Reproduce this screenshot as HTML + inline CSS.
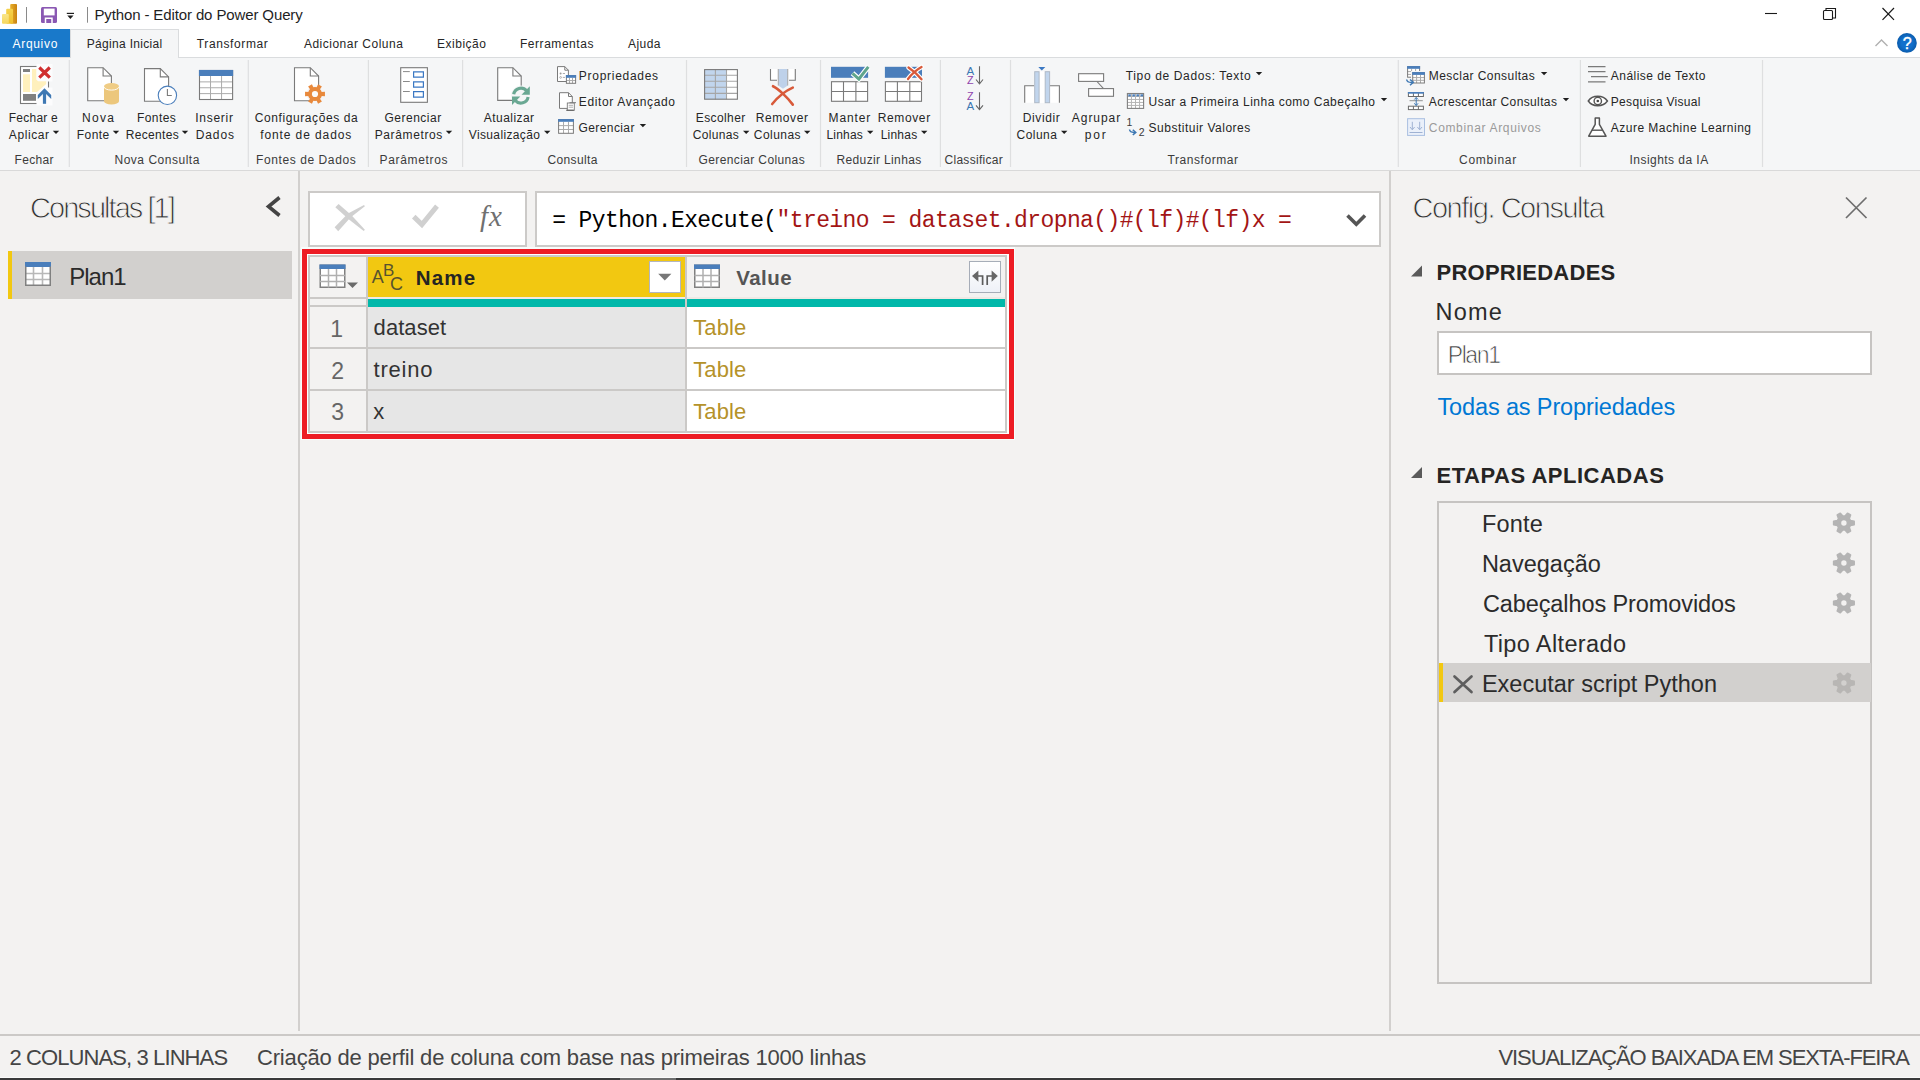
<!DOCTYPE html>
<html lang="pt-BR"><head><meta charset="utf-8"><title>Python - Editor do Power Query</title>
<style>
*{box-sizing:border-box;margin:0;padding:0}
html,body{width:1920px;height:1080px;overflow:hidden;background:#fff}
body{position:relative;font-family:"Liberation Sans",sans-serif}
.a{position:absolute}
.t{position:absolute;white-space:pre;line-height:1;display:block}
svg{position:absolute;overflow:visible}

</style></head>
<body>
<!-- backgrounds -->
<div class="a" style="left:0;top:29px;width:1920px;height:29px;border-bottom:1px solid #dadcde"></div>
<div class="a" style="left:0;top:29px;width:70px;height:28px;background:#1979ca"></div>
<div class="a" style="left:70px;top:29px;width:109px;height:29px;background:#f5f6f7;border:1px solid #dadcde;border-bottom:none"></div>
<div class="a" style="left:0;top:58px;width:1920px;height:113px;background:#f5f6f7;border-bottom:1px solid #d9d9d9"></div>
<div class="a" style="left:0;top:171px;width:1920px;height:864px;background:#f3f2f1"></div>
<!-- pane dividers -->
<div class="a" style="left:298px;top:171px;width:2px;height:860px;background:#d2d0ce"></div>
<div class="a" style="left:1389px;top:171px;width:2px;height:860px;background:#d2d0ce"></div>
<!-- status bar -->
<div class="a" style="left:0;top:1034px;width:1920px;height:46px;background:#f3f2f1;border-top:2px solid #cbc9c7"></div>
<div class="a" style="left:0;top:1077px;width:1920px;height:1px;background:#fbfbfb"></div>
<div class="a" style="left:0;top:1078px;width:1920px;height:2px;background:#3a3a3a"></div>
<div class="a" style="left:620px;top:1078px;width:56px;height:2px;background:#6e6e6e"></div>

<!-- LEFT PANE -->
<svg style="left:0;top:0" width="300" height="320" viewBox="0 0 300 320">
  <polyline points="279.5,197.5 268.5,206.5 279.5,215.5" fill="none" stroke="#444" stroke-width="3.6" stroke-linejoin="miter"/>
</svg>
<div class="a" style="left:8px;top:251px;width:284px;height:48px;background:#d2d0ce;border-left:4px solid #f2c811"></div>
<svg style="left:25px;top:262px" width="26" height="24" viewBox="0 0 26 24">
  <rect x="0.5" y="0.5" width="25" height="23" fill="#fff" stroke="#808080"/>
  <rect x="0" y="0" width="26" height="5" fill="#4a7ebb"/>
  <path d="M0.5 11.5H25.5M0.5 17.5H25.5M8.5 5V23.5M17.5 5V23.5" stroke="#b8b8b8" stroke-width="1.6" fill="none"/>
  <rect x="0.75" y="0.75" width="24.5" height="22.5" fill="none" stroke="#808080" stroke-width="1.5"/>
  <rect x="0" y="0" width="26" height="4.5" fill="#4a7ebb"/>
</svg>

<!-- FORMULA BAR -->
<div class="a" style="left:308px;top:191px;width:219px;height:56px;background:#fff;border:2px solid #cccac8"></div>
<div class="a" style="left:535px;top:191px;width:846px;height:56px;background:#fff;border:2px solid #cccac8"></div>
<svg style="left:300px;top:185px" width="1090" height="70" viewBox="300 185 1090 70">
  <polygon points="335.300,207.300 338.600,203.900 351.500,215.300 364.900,229.800 363.700,231.100 349,219.400" fill="#d0d0d0"/>
  <polygon points="334.600,227.200 338.200,231.300 350.500,217.500 364.900,206.300 364,205.100 348,213.500" fill="#d0d0d0"/>
  <polyline points="413.750,216.600 421.900,224.600 437,206.200" fill="none" stroke="#d0d0d0" stroke-width="5"/>
  <polyline points="1347.5,215.5 1356.3,224.3 1365,215.5" fill="none" stroke="#555" stroke-width="3.6"/>
</svg>

<!-- TABLE -->
<div class="a" style="left:302px;top:249px;width:712px;height:190px;border:5px solid #ed1c24;background:#fff;box-shadow:0 0 0 1px #f8fdfc"></div>
<div class="a" style="left:301px;top:247px;width:714px;height:1px;background:#f8fdfc"></div>
<div class="a" style="left:308px;top:255px;width:699px;height:178px;background:#cbc9c7"></div>
<!-- index column -->
<div class="a" style="left:310px;top:257px;width:56px;height:40px;background:#f3f2f1"></div>
<div class="a" style="left:310px;top:299px;width:56px;height:6px;background:#f3f2f1"></div>
<div class="a" style="left:310px;top:307px;width:56px;height:40px;background:#f3f2f1"></div>
<div class="a" style="left:310px;top:349px;width:56px;height:40px;background:#f3f2f1"></div>
<div class="a" style="left:310px;top:391px;width:56px;height:40px;background:#f3f2f1"></div>
<!-- name column -->
<div class="a" style="left:368px;top:257px;width:317px;height:40px;background:#f2c811"></div>
<div class="a" style="left:368px;top:297px;width:317px;height:2px;background:#efe9e4"></div>
<div class="a" style="left:368px;top:299px;width:317px;height:8px;background:#01b8aa"></div>
<div class="a" style="left:368px;top:307px;width:317px;height:40px;background:#e6e6e6"></div>
<div class="a" style="left:368px;top:349px;width:317px;height:40px;background:#e6e6e6"></div>
<div class="a" style="left:368px;top:391px;width:317px;height:40px;background:#e6e6e6"></div>
<!-- value column -->
<div class="a" style="left:687px;top:257px;width:318px;height:40px;background:#f3f2f1"></div>
<div class="a" style="left:687px;top:297px;width:318px;height:2px;background:#efe9e4"></div>
<div class="a" style="left:687px;top:299px;width:318px;height:8px;background:#01b8aa"></div>
<div class="a" style="left:687px;top:307px;width:318px;height:40px;background:#ffffff"></div>
<div class="a" style="left:687px;top:349px;width:318px;height:40px;background:#ffffff"></div>
<div class="a" style="left:687px;top:391px;width:318px;height:40px;background:#ffffff"></div>
<!-- header widgets -->
<div class="a" style="left:649.2px;top:261.2px;width:31.6px;height:31.5px;background:#fff;border:1.3px solid #b3b6c0"></div>
<div class="a" style="left:969.1px;top:261px;width:31.8px;height:31.9px;background:linear-gradient(#ffffff,#eef1f7);border:1.4px solid #a6adb8"></div>
<svg style="left:300px;top:250px" width="720" height="60" viewBox="300 250 720 60">
  <polygon points="658.2,273.8 671.4,273.8 664.8,280.4" fill="#777"/>
  <!-- index header icon -->
  <rect x="320.25" y="265.25" width="24.5" height="22" fill="#fff" stroke="#808080" stroke-width="1.5"/>
  <path d="M320 275.5H345M320 281.5H345M328.5 268V287.5M336.5 268V287.5" stroke="#b0b0b0" stroke-width="1.5" fill="none"/>
  <rect x="319.5" y="264.5" width="26" height="4.5" fill="#4a7ebb"/>
  <polygon points="347,282.5 358,282.5 352.5,288" fill="#6a6a6a"/>
  <!-- value header icon -->
  <rect x="694.75" y="265.25" width="24.5" height="22" fill="#fff" stroke="#808080" stroke-width="1.5"/>
  <path d="M694.5 275.5H719.5M694.5 281.5H719.5M703 268V287.5M711 268V287.5" stroke="#b0b0b0" stroke-width="1.5" fill="none"/>
  <rect x="694" y="264.5" width="26" height="4.5" fill="#4a7ebb"/>
  <!-- expand icon -->
  <path d="M977.5 276H982.6V285M992.3 276H987.2V285" stroke="#5c5c5c" stroke-width="1.7" fill="none"/>
  <polygon points="972,276 978.4,270.4 978.4,281.8" fill="#666"/>
  <polygon points="997.8,276 991.6,270.4 991.6,281.8" fill="#666"/>
</svg>

<!-- RIGHT PANE -->
<svg style="left:1400px;top:190px" width="500" height="520" viewBox="1400 190 500 520">
  <path d="M1846 197.5L1866.5 218M1866.5 197.5L1846 218" stroke="#6e6e6e" stroke-width="1.7" fill="none"/>
  <polygon points="1422,265.5 1422,276.5 1411,276.5" fill="#5a5a5a"/>
  <polygon points="1422,467 1422,478 1411,478" fill="#5a5a5a"/>
</svg>
<div class="a" style="left:1437px;top:331px;width:435px;height:44px;background:#fff;border:2px solid #c6c4c2"></div>
<div class="a" style="left:1437px;top:501px;width:435px;height:483px;border:2px solid #c6c4c2"></div>
<div class="a" style="left:1439px;top:663px;width:431.5px;height:39px;background:#d2d0ce;border-left:4px solid #f2c811"></div>
<svg style="left:1440px;top:505px" width="430" height="200" viewBox="1440 505 430 200">
  <defs>
    <g id="gear"><path fill-rule="evenodd" stroke-width="1.6" stroke-linejoin="round" d="M6.55 -2.47L10.25 -1.76L10.25 1.76L6.55 2.47L5.41 4.44L6.65 8.00L3.60 9.76L1.14 6.91L-1.14 6.91L-3.60 9.76L-6.65 8.00L-5.41 4.44L-6.55 2.47L-10.25 1.76L-10.25 -1.76L-6.55 -2.47L-5.41 -4.44L-6.65 -8.00L-3.60 -9.76L-1.14 -6.91L1.14 -6.91L3.60 -9.76L6.65 -8.00L5.41 -4.44ZM3.50 0.00A3.5 3.5 0 1 0 -3.50 0.00A3.5 3.5 0 1 0 3.50 0.00Z"/></g>
  </defs>
  <use href="#gear" x="1843.9" y="523.0" fill="#b4b4b4" stroke="#b4b4b4"/>
  <use href="#gear" x="1843.9" y="563.0" fill="#b4b4b4" stroke="#b4b4b4"/>
  <use href="#gear" x="1843.9" y="603.0" fill="#b4b4b4" stroke="#b4b4b4"/>
  <use href="#gear" x="1843.9" y="683" fill="#b8b6b4" stroke="#b8b6b4"/>
  <path d="M1454.5 676.500L1471.500 692M1471.500 676.500L1454.500 692" stroke="#5e5e5e" stroke-width="2.700" stroke-linecap="round" fill="none"/>
</svg>
<svg style="left:0;top:0" width="1920" height="175" viewBox="0 0 1920 175">
<linearGradient id="pb1" x1="0" y1="0" x2="1" y2="0"><stop offset="0" stop-color="#e9b12c"/><stop offset="1" stop-color="#c9820f"/></linearGradient>
<linearGradient id="pb2" x1="0" y1="0" x2="0" y2="1"><stop offset="0" stop-color="#f6d34d"/><stop offset="1" stop-color="#f0bf2b"/></linearGradient>
<linearGradient id="pb3" x1="0" y1="0" x2="0" y2="1"><stop offset="0" stop-color="#f9e589"/><stop offset="1" stop-color="#f6d75c"/></linearGradient>
<rect x="10.2" y="4" width="6.8" height="19.8" rx="1" fill="url(#pb1)"/>
<rect x="6.2" y="8.8" width="6.8" height="15" rx="1" fill="url(#pb2)"/>
<rect x="2" y="14" width="6.8" height="9.8" rx="1" fill="url(#pb3)"/>
<path d="M26.5 7V22.7M87.5 7V22.7" stroke="#8a8a8a" stroke-width="1"/>
<rect x="41" y="7" width="16" height="16" rx="1.5" fill="#8a58b3"/>
<rect x="43.8" y="8.6" width="10.8" height="6.8" fill="#fff"/>
<path d="M45.5 23V18.2H52V23" fill="none" stroke="#fff" stroke-width="1.5"/>
<rect x="66.8" y="12.8" width="7.2" height="1.2" fill="#1e1e1e"/>
<polygon points="67.3,15.6 73.5,15.6 70.39999999999999,19" fill="#1e1e1e"/>
<path d="M1765 13.5H1777" stroke="#1a1a1a" stroke-width="1.1"/>
<rect x="1823.5" y="10.5" width="9" height="9" fill="none" stroke="#1a1a1a" stroke-width="1.1" rx="1"/>
<path d="M1826 10.5V8.5H1835.5V18H1832.5" fill="none" stroke="#1a1a1a" stroke-width="1.1"/>
<path d="M1882.5 8L1894 19.8M1894 8L1882.5 19.8" stroke="#1a1a1a" stroke-width="1.2"/>
<polyline points="1875.5,46 1881.5,40 1887.5,46" fill="none" stroke="#b0b0b0" stroke-width="1.4"/>
<radialGradient id="hg"><stop offset="0.55" stop-color="#1170cc"/><stop offset="1" stop-color="#0b5cad"/></radialGradient><circle cx="1906.9" cy="42.9" r="9.9" fill="url(#hg)"/>
<path d="M69.3 60V167M248.3 60V167M368.4 60V167M462.6 60V167M686.5 60V167M820.5 60V167M940.4 60V167M1010.5 60V167M1398.3 60V167M1580.4 60V167M1762.5 60V167" stroke="#dedfe0" stroke-width="1.2"/>
<polygon points="52.8,130.8 59.199999999999996,130.8 56,134.10000000000002" fill="#1e1e1e"/>
<polygon points="112.8,130.8 119.2,130.8 116,134.10000000000002" fill="#1e1e1e"/>
<polygon points="181.8,130.8 188.20000000000002,130.8 185,134.10000000000002" fill="#1e1e1e"/>
<polygon points="445.8,130.8 452.2,130.8 449,134.10000000000002" fill="#1e1e1e"/>
<polygon points="544,130.8 550.4,130.8 547.2,134.10000000000002" fill="#1e1e1e"/>
<polygon points="743,130.8 749.4,130.8 746.2,134.10000000000002" fill="#1e1e1e"/>
<polygon points="804,130.8 810.4,130.8 807.2,134.10000000000002" fill="#1e1e1e"/>
<polygon points="867,130.8 873.4,130.8 870.2,134.10000000000002" fill="#1e1e1e"/>
<polygon points="921,130.8 927.4,130.8 924.2,134.10000000000002" fill="#1e1e1e"/>
<polygon points="1061,130.8 1067.4,130.8 1064.2,134.10000000000002" fill="#1e1e1e"/>
<polygon points="639.7,124 646.1,124 642.9000000000001,127.3" fill="#1e1e1e"/>
<polygon points="1255.8,72 1262.2,72 1259,75.3" fill="#1e1e1e"/>
<polygon points="1380.8,98 1387.2,98 1384,101.3" fill="#1e1e1e"/>
<polygon points="1540.9,72 1547.3000000000002,72 1544.1000000000001,75.3" fill="#1e1e1e"/>
<polygon points="1562.8,98 1569.2,98 1566,101.3" fill="#1e1e1e"/>
<rect x="20.5" y="66.5" width="28" height="37" fill="#fff" stroke="#7a7a7a" stroke-width="1.1"/>
<rect x="36.5" y="64" width="16" height="17.5" fill="#fcfcfd"/>
<rect x="36.5" y="87.5" width="16" height="18" fill="#fcfcfd"/>
<rect x="23" y="69" width="7" height="3" fill="#808080"/>
<rect x="23" y="74.3" width="7" height="17.7" fill="#fff0bd"/>
<polygon points="32,69 36.3,69 36.3,79.5 38,81.2 46.2,81.2 46.2,84 37,92 32,92" fill="#fff0bd"/>
<rect x="23" y="94" width="13" height="6.8" fill="#808080"/>
<path d="M39.3 67.5L49.8 77.7M49.8 67.5L39.3 77.7" stroke="#d02f2f" stroke-width="3.2"/>
<path d="M44.5 103.8V91" stroke="#3e78b3" stroke-width="3.2"/>
<polygon points="44.5,88.3 51.2,95 51.2,99 44.5,92.5 37.8,99 37.8,95" fill="#3e78b3"/>
<path d="M87.7 67.7H103.10000000000001L111.4 76V100.7H87.7Z" fill="#fff" stroke="#7a7a7a" stroke-width="1.1"/><path d="M103.10000000000001 67.7V76H111.4" fill="none" stroke="#7a7a7a" stroke-width="1.1"/>
<path d="M104 86.5V101.2A7.5 3.3 0 0 0 119 101.2V86.5Z" fill="#ecc77c"/>
<ellipse cx="111.5" cy="86.3" rx="7.5" ry="3.4" fill="#efcc85"/>
<path d="M104 86.8A7.5 3.3 0 0 0 119 86.8" fill="none" stroke="#fff" stroke-width="0.9"/>
<path d="M144.5 68.6H160.29999999999998L168.6 76.89999999999999V101.3H144.5Z" fill="#fff" stroke="#7a7a7a" stroke-width="1.1"/><path d="M160.29999999999998 68.6V76.89999999999999H168.6" fill="none" stroke="#7a7a7a" stroke-width="1.1"/>
<circle cx="167.4" cy="95.3" r="9.2" fill="#fff" stroke="#4a7ebb" stroke-width="1.1"/>
<path d="M167.4 89V95.5H171.8" fill="none" stroke="#7a7a7a" stroke-width="1.1"/>
<rect x="199.5" y="70.5" width="33.099999999999994" height="29" fill="#fff"/><path d="M210.53 76V99.5M221.57 76V99.5M199.5 81.88H232.6M199.5 87.75H232.6M199.5 93.62H232.6" stroke="#ababab" stroke-width="1" fill="none"/><rect x="199.5" y="70.5" width="33.099999999999994" height="29" fill="none" stroke="#7a7a7a" stroke-width="1.1"/><rect x="198.95" y="69.95" width="34.199999999999996" height="6.05" fill="#4a7ebb"/>
<path d="M294.5 67.7H310.3L318.6 76V100.7H294.5Z" fill="#fff" stroke="#7a7a7a" stroke-width="1.1"/><path d="M310.3 67.7V76H318.6" fill="none" stroke="#7a7a7a" stroke-width="1.1"/>
<circle cx="315" cy="94" r="8.5" fill="#f5f6f7"/><circle cx="315" cy="94" r="7" fill="#e8893c"/><path d="M321.21 92.08L324.95 91.77L324.95 96.23L321.21 95.92L319.77 98.42L321.9 101.51L318.05 103.73L316.44 100.34L313.56 100.34L311.95 103.73L308.1 101.51L310.23 98.42L308.79 95.92L305.05 96.23L305.05 91.77L308.79 92.08L310.23 89.58L308.1 86.49L311.95 84.27L313.56 87.66L316.44 87.66L318.05 84.27L321.9 86.49L319.77 89.58ZM318.1 94A3.1 3.1 0 1 0 311.9 94A3.1 3.1 0 1 0 318.1 94Z" fill="#e8893c" fill-rule="evenodd"/><circle cx="315" cy="94" r="3.1" fill="#fbfbfb"/>
<rect x="400.7" y="67.7" width="26.7" height="34.6" fill="#fff" stroke="#7a7a7a" stroke-width="1.1"/>
<path d="M403 71.6H409.8M403 81.5H409.8M403 91.5H409.8" stroke="#8a8a8a" stroke-width="1"/>
<path d="M413.6 71.8H423.4V77.2H413.6ZM413.6 81.8H423.4V87.2H413.6ZM413.6 91.7H423.4V97.2H413.6Z" fill="#fff" stroke="#3b78c3" stroke-width="1.2"/>
<path d="M497.7 67.7H512.9000000000001L521.2 76V100.4H497.7Z" fill="#fff" stroke="#7a7a7a" stroke-width="1.1"/><path d="M512.9000000000001 67.7V76H521.2" fill="none" stroke="#7a7a7a" stroke-width="1.1"/>
<circle cx="520.9" cy="95.6" r="10" fill="#f5f6f7"/>
<path d="M513.7 94.3A7.3 7.3 0 0 1 526.5 90.8" fill="none" stroke="#6aa893" stroke-width="3.1"/>
<polygon points="529.8,86.3 529.8,94.8 521.5,94.8" fill="#6aa893"/>
<path d="M528.1 96.9A7.3 7.3 0 0 1 515.3 100.4" fill="none" stroke="#6aa893" stroke-width="3.1"/>
<polygon points="512,104.9 512,96.4 520.3,96.4" fill="#6aa893"/>
<path d="M557.5 66.6H564.8L568.4 70.19999999999999V81.5H557.5Z" fill="#fff" stroke="#7a7a7a" stroke-width="1"/><path d="M564.8 66.6V70.19999999999999H568.4" fill="none" stroke="#7a7a7a" stroke-width="1"/>
<circle cx="560.6" cy="73.5" r="1" fill="#9a9a9a"/><circle cx="560.6" cy="77.4" r="0.9" fill="none" stroke="#9a9a9a" stroke-width="0.7"/>
<path d="M562.8 73.5H565M562.8 77.4H565" stroke="#9a9a9a" stroke-width="0.8"/>
<rect x="566.4" y="75.6" width="9.200000000000045" height="7.700000000000003" fill="#fff"/><path d="M569.47 77.8V83.3M572.53 77.8V83.3M566.4 80.55H575.6" stroke="#ababab" stroke-width="1" fill="none"/><rect x="566.4" y="75.6" width="9.200000000000045" height="7.700000000000003" fill="none" stroke="#7a7a7a" stroke-width="1"/><rect x="565.9" y="75.1" width="10.200000000000045" height="2.7" fill="#4a7ebb"/>
<path d="M559.5 92.7H568.5L572.3 96.5V108.4H559.5Z" fill="#fff" stroke="#7a7a7a" stroke-width="1"/><path d="M568.5 92.7V96.5H572.3" fill="none" stroke="#7a7a7a" stroke-width="1"/>
<rect x="567.3" y="103" width="7" height="7.3" fill="#fff" stroke="#7a7a7a" stroke-width="0.9"/>
<path d="M569.5 102.7H576" stroke="#7a7a7a" stroke-width="1"/>
<path d="M568.7 105.3H573M568.7 107.2H573" stroke="#9a9a9a" stroke-width="0.8"/>
<path d="M566.3 110.3H573.8" stroke="#6a6a6a" stroke-width="1.3"/>
<rect x="558.6" y="119.6" width="14.799999999999955" height="13.700000000000017" fill="#fff"/><path d="M563.53 121.8V133.3M568.47 121.8V133.3M558.6 125.63H573.4M558.6 129.47H573.4" stroke="#ababab" stroke-width="1" fill="none"/><rect x="558.6" y="119.6" width="14.799999999999955" height="13.700000000000017" fill="none" stroke="#7a7a7a" stroke-width="1"/><rect x="558.1" y="119.1" width="15.799999999999955" height="2.7" fill="#4a7ebb"/>
<rect x="704.6" y="69.6" width="32.799999999999955" height="29.60000000000001" fill="#fff"/><rect x="704.6" y="69.6" width="21.899999999999977" height="29.60000000000001" fill="#c1d5ed"/>
<path d="M715.4 69.6V99.2M726.5 69.6V99.2M704.6 75.3H737.4M704.6 81.3H737.4M704.6 87.3H737.4M704.6 93.4H737.4" stroke="#a6a6a6" stroke-width="1.1" fill="none"/><rect x="704.6" y="69.6" width="32.799999999999955" height="29.60000000000001" fill="none" stroke="#7a7a7a" stroke-width="1.1"/>
<path d="M770.5 69V80.2H777V69Z" fill="#fff"/><path d="M789 69V80.2H795.3V69Z" fill="#fff"/>
<path d="M770.5 69V80.2H777M789 80.2H795.3V69" fill="none" stroke="#7a7a7a" stroke-width="1.1"/>
<path d="M778.3 69V85.5L783 88.7L787.7 85.5V69Z" fill="#bed1ea"/>
<path d="M778.3 69V85.5M787.7 69V85.5" stroke="#a9a9a9" stroke-width="1"/>
<path d="M773 86.2C778 88.5 787 97 792.8 104.6M792.8 87.6C785 91 777 98 772.2 104" fill="none" stroke="#d85a3a" stroke-width="2.6" stroke-linecap="round"/>
<rect x="831" y="66.8" width="37.10000000000002" height="11" fill="#4a7ebb"/><rect x="831.5" y="81.7" width="36.10000000000002" height="19.6" fill="#fff" stroke="#7a7a7a" stroke-width="1.1"/><path d="M843.5 81.7V101.3M855.9 81.7V101.3M831.5 91.5H867.6" stroke="#7a7a7a" stroke-width="1.1" fill="none"/>
<polyline points="852.5,73.3 858.9,79 868.3,66.8" fill="none" stroke="#fff" stroke-width="5.2"/>
<polyline points="852.5,73.3 858.9,79 868.3,66.8" fill="none" stroke="#5fa58c" stroke-width="3"/>
<rect x="884.9" y="66.8" width="37.10000000000002" height="11" fill="#4a7ebb"/><rect x="885.4" y="81.7" width="36.10000000000002" height="19.6" fill="#fff" stroke="#7a7a7a" stroke-width="1.1"/><path d="M897.4 81.7V101.3M909.8 81.7V101.3M885.4 91.5H921.5" stroke="#7a7a7a" stroke-width="1.1" fill="none"/>
<path d="M908.5 67.5C913 70.5 918 75 921.5 79.3M921.5 67C916 70 911 75 908 79" fill="none" stroke="#fff" stroke-width="4.6" stroke-linecap="round"/>
<path d="M908.5 67.5C913 70.5 918 75 921.5 79.3M921.5 67C916 70 911 75 908 79" fill="none" stroke="#d85a3a" stroke-width="2.3" stroke-linecap="round"/>
<text x="966.6" y="74.6" font-family="Liberation Sans, sans-serif" font-size="11.5" fill="#3b78b3">A</text>
<text x="967" y="84.2" font-family="Liberation Sans, sans-serif" font-size="10.8" fill="#8e44ad">Z</text>
<path d="M979.5 66.3V83.5M976 79.5L979.5 83.8L983 79.5" fill="none" stroke="#666" stroke-width="1.1"/>
<text x="967" y="99.8" font-family="Liberation Sans, sans-serif" font-size="10.8" fill="#8e44ad">Z</text>
<text x="966.6" y="109.8" font-family="Liberation Sans, sans-serif" font-size="11.5" fill="#3b78b3">A</text>
<path d="M979.5 92.3V109.3M976 105.3L979.5 109.6L983 105.3" fill="none" stroke="#666" stroke-width="1.1"/>
<path d="M1024.7 102.7V85.8H1059.4V102.7Z" fill="#fff"/>
<path d="M1024.7 102.7V85.8H1034M1050 85.8H1059.4V102.7" fill="none" stroke="#7a7a7a" stroke-width="1.1"/>
<rect x="1034.2" y="71.3" width="15.8" height="31.4" fill="#fff"/>
<rect x="1034.7" y="71.7" width="4.4" height="31" fill="#c1d5ed" stroke="#aeb9c6" stroke-width="1"/>
<rect x="1045.2" y="71.7" width="4.4" height="31" fill="#c1d5ed" stroke="#aeb9c6" stroke-width="1"/>
<polygon points="1038.3,67 1045.3,67 1041.8,70.5" fill="#3b78c3"/>
<path d="M1097 81.5L1103.3 88.3" stroke="#7a7a7a" stroke-width="1.1"/>
<rect x="1078.6" y="73.7" width="25" height="7.7" fill="#fff" stroke="#7a7a7a" stroke-width="1.1"/>
<rect x="1088.6" y="88.6" width="24.9" height="7.7" fill="#fff" stroke="#7a7a7a" stroke-width="1.1"/>
<rect x="1127.4" y="93.5" width="16.199999999999818" height="14.900000000000006" fill="#fff"/><path d="M1131.45 93.5V108.4M1135.5 93.5V108.4M1139.55 93.5V108.4M1127.4 96.48H1143.6M1127.4 99.46H1143.6M1127.4 102.44H1143.6M1127.4 105.42H1143.6" stroke="#b5b5b5" stroke-width="1" fill="none"/><rect x="1127.4" y="93.5" width="16.199999999999818" height="14.900000000000006" fill="none" stroke="#808080" stroke-width="1.1"/><rect x="1128.3" y="94.3" width="2.55" height="2.1" fill="#4a7ebb"/><rect x="1132.35" y="94.3" width="2.55" height="2.1" fill="#4a7ebb"/><rect x="1136.4" y="94.3" width="2.55" height="2.1" fill="#4a7ebb"/><rect x="1140.45" y="94.3" width="2.55" height="2.1" fill="#4a7ebb"/>
<text x="1126.5" y="125.6" font-family="Liberation Sans, sans-serif" font-size="10.5" fill="#3a3a3a">1</text>
<text x="1138.8" y="135.8" font-family="Liberation Sans, sans-serif" font-size="10.5" fill="#3a3a3a">2</text>
<path d="M1129.5 129.5C1129.8 132 1131.5 132.6 1135 132.4" fill="none" stroke="#3e78b3" stroke-width="1.5"/>
<polyline points="1132.8,129.7 1135.8,132.4 1132.8,135" fill="none" stroke="#3e78b3" stroke-width="1.5"/>
<rect x="1407.6" y="66.6" width="12" height="10.600000000000009" fill="#fff"/><path d="M1411.6 68.8V77.2M1415.6 68.8V77.2M1407.6 71.6H1419.6M1407.6 74.4H1419.6" stroke="#ababab" stroke-width="1" fill="none"/><rect x="1407.6" y="66.6" width="12" height="10.600000000000009" fill="none" stroke="#7a7a7a" stroke-width="1"/><rect x="1407.1" y="66.1" width="13" height="2.7" fill="#4a7ebb"/>
<rect x="1411" y="71" width="15" height="13.5" fill="#f5f6f7"/>
<rect x="1412.7" y="72.6" width="11.700000000000045" height="10.400000000000006" fill="#fff"/><path d="M1416.6 74.89999999999999V83M1420.5 74.89999999999999V83M1412.7 77.6H1424.4M1412.7 80.3H1424.4" stroke="#ababab" stroke-width="1" fill="none"/><rect x="1412.7" y="72.6" width="11.700000000000045" height="10.400000000000006" fill="none" stroke="#7a7a7a" stroke-width="1"/><rect x="1412.2" y="72.1" width="12.700000000000045" height="2.8" fill="#4a7ebb"/>
<path d="M1406.6 79.5C1407 82 1409 82.7 1412.5 82.4" fill="none" stroke="#3e78b3" stroke-width="1.5"/>
<polyline points="1410,79.5 1413.3,82.3 1410,85.2" fill="none" stroke="#3e78b3" stroke-width="1.5"/>
<rect x="1408.4" y="92.5" width="15" height="4" fill="#fff" stroke="#6a6a6a" stroke-width="1"/>
<path d="M1413.4 92.5V96.5M1418.4 92.5V96.5" stroke="#6a6a6a" stroke-width="1"/>
<rect x="1407.9" y="92" width="16" height="1.7" fill="#4a7ebb"/>
<rect x="1408.4" y="106.2" width="15" height="3.4" fill="#fff" stroke="#6a6a6a" stroke-width="1"/>
<path d="M1413.4 106.2V109.6M1418.4 106.2V109.6" stroke="#6a6a6a" stroke-width="1"/>
<path d="M1409.5 100.7H1422.8" stroke="#8a8a8a" stroke-width="0.9"/>
<path d="M1416.2 97.5V105.5M1414.3 99.5L1416.2 97.5L1418.1 99.5M1414.3 103.3L1416.2 105.5L1418.1 103.3" fill="none" stroke="#3e78b3" stroke-width="1"/>
<rect x="1407.6" y="118.7" width="16.9" height="16.7" fill="#eaf0fa" stroke="#a9bfe0" stroke-width="1"/>
<path d="M1412.3 121.8V129.5M1410 127L1412.3 129.8L1414.6 127M1419.7 121.8V129.5M1417.4 127L1419.7 129.8L1422 127" fill="none" stroke="#9fb2d3" stroke-width="1"/>
<path d="M1409.5 132.5H1422.5" stroke="#9fb2d3" stroke-width="1"/>
<path d="M1588 66.7H1605.5M1588 71.7H1605.5M1591 76.7H1607.8M1588 81.9H1605.5" stroke="#7a7a7a" stroke-width="1.3"/>
<path d="M1588.3 101C1592.5 94.8 1603 94.8 1607.4 101C1603 107.2 1592.5 107.2 1588.3 101Z" fill="#fff" stroke="#555" stroke-width="1.5"/>
<circle cx="1597.8" cy="101" r="3.7" fill="#fff" stroke="#555" stroke-width="1.4"/><circle cx="1597.8" cy="101" r="1.3" fill="#444"/>
<path d="M1594.7 117.9H1599.9M1595.2 118V124.3L1588.7 136.2H1606L1599.4 124.3V118" fill="#fff" stroke="#555" stroke-width="1.5" stroke-linejoin="round"/>
<path d="M1592 130.2H1602.7" stroke="#555" stroke-width="1.4"/>
</svg>
<span class="t" style="left:94.40px;top:7.30px;font-size:15px;color:#1f1f1f;letter-spacing:-0.118px;">Python - Editor do Power Query</span>
<span class="t" style="left:12.50px;top:37.84px;font-size:12px;color:#ffffff;letter-spacing:0.690px;">Arquivo</span>
<span class="t" style="left:86.80px;top:37.84px;font-size:12px;color:#262626;letter-spacing:0.305px;">Página Inicial</span>
<span class="t" style="left:196.80px;top:37.84px;font-size:12px;color:#262626;letter-spacing:0.612px;">Transformar</span>
<span class="t" style="left:303.90px;top:37.84px;font-size:12px;color:#262626;letter-spacing:0.504px;">Adicionar Coluna</span>
<span class="t" style="left:437.00px;top:37.84px;font-size:12px;color:#262626;letter-spacing:0.514px;">Exibição</span>
<span class="t" style="left:520.00px;top:37.84px;font-size:12px;color:#262626;letter-spacing:0.540px;">Ferramentas</span>
<span class="t" style="left:628.00px;top:37.84px;font-size:12px;color:#262626;letter-spacing:0.450px;">Ajuda</span>
<span class="t" style="left:8.80px;top:111.84px;font-size:12px;color:#262626;letter-spacing:0.231px;">Fechar e</span>
<span class="t" style="left:8.80px;top:128.84px;font-size:12px;color:#262626;letter-spacing:0.600px;">Aplicar</span>
<span class="t" style="left:82.00px;top:111.84px;font-size:12px;color:#262626;letter-spacing:1.320px;">Nova</span>
<span class="t" style="left:76.80px;top:128.84px;font-size:12px;color:#262626;letter-spacing:0.450px;">Fonte</span>
<span class="t" style="left:137.00px;top:111.84px;font-size:12px;color:#262626;letter-spacing:0.432px;">Fontes</span>
<span class="t" style="left:125.80px;top:128.84px;font-size:12px;color:#262626;letter-spacing:0.309px;">Recentes</span>
<span class="t" style="left:195.30px;top:111.84px;font-size:12px;color:#262626;letter-spacing:0.720px;">Inserir</span>
<span class="t" style="left:195.70px;top:128.84px;font-size:12px;color:#262626;letter-spacing:0.900px;">Dados</span>
<span class="t" style="left:254.70px;top:111.84px;font-size:12px;color:#262626;letter-spacing:0.600px;">Configurações da</span>
<span class="t" style="left:260.20px;top:128.84px;font-size:12px;color:#262626;letter-spacing:0.900px;">fonte de dados</span>
<span class="t" style="left:384.50px;top:111.84px;font-size:12px;color:#262626;letter-spacing:0.495px;">Gerenciar</span>
<span class="t" style="left:374.70px;top:128.84px;font-size:12px;color:#262626;letter-spacing:0.620px;">Parâmetros</span>
<span class="t" style="left:483.80px;top:111.84px;font-size:12px;color:#262626;letter-spacing:0.450px;">Atualizar</span>
<span class="t" style="left:468.80px;top:128.84px;font-size:12px;color:#262626;letter-spacing:0.360px;">Visualização</span>
<span class="t" style="left:695.80px;top:111.84px;font-size:12px;color:#262626;letter-spacing:0.386px;">Escolher</span>
<span class="t" style="left:692.70px;top:128.84px;font-size:12px;color:#262626;letter-spacing:0.330px;">Colunas</span>
<span class="t" style="left:755.80px;top:111.84px;font-size:12px;color:#262626;letter-spacing:0.570px;">Remover</span>
<span class="t" style="left:753.80px;top:128.84px;font-size:12px;color:#262626;letter-spacing:0.450px;">Colunas</span>
<span class="t" style="left:828.50px;top:111.84px;font-size:12px;color:#262626;letter-spacing:0.900px;">Manter</span>
<span class="t" style="left:826.50px;top:128.84px;font-size:12px;color:#262626;letter-spacing:0.180px;">Linhas</span>
<span class="t" style="left:877.70px;top:111.84px;font-size:12px;color:#262626;letter-spacing:0.630px;">Remover</span>
<span class="t" style="left:880.70px;top:128.84px;font-size:12px;color:#262626;letter-spacing:0.216px;">Linhas</span>
<span class="t" style="left:1022.70px;top:111.84px;font-size:12px;color:#262626;letter-spacing:0.630px;">Dividir</span>
<span class="t" style="left:1016.50px;top:128.84px;font-size:12px;color:#262626;letter-spacing:0.468px;">Coluna</span>
<span class="t" style="left:1071.80px;top:111.84px;font-size:12px;color:#262626;letter-spacing:0.960px;">Agrupar</span>
<span class="t" style="left:1084.70px;top:128.84px;font-size:12px;color:#262626;letter-spacing:1.800px;">por</span>
<span class="t" style="left:14.50px;top:153.84px;font-size:12px;color:#3b3b3b;letter-spacing:0.324px;">Fechar</span>
<span class="t" style="left:114.50px;top:153.84px;font-size:12px;color:#3b3b3b;letter-spacing:0.510px;">Nova Consulta</span>
<span class="t" style="left:256.00px;top:153.84px;font-size:12px;color:#3b3b3b;letter-spacing:0.591px;">Fontes de Dados</span>
<span class="t" style="left:379.50px;top:153.84px;font-size:12px;color:#3b3b3b;letter-spacing:0.660px;">Parâmetros</span>
<span class="t" style="left:547.50px;top:153.84px;font-size:12px;color:#3b3b3b;letter-spacing:0.360px;">Consulta</span>
<span class="t" style="left:698.50px;top:153.84px;font-size:12px;color:#3b3b3b;letter-spacing:0.383px;">Gerenciar Colunas</span>
<span class="t" style="left:836.50px;top:153.84px;font-size:12px;color:#3b3b3b;letter-spacing:0.360px;">Reduzir Linhas</span>
<span class="t" style="left:944.50px;top:153.84px;font-size:12px;color:#3b3b3b;letter-spacing:0.288px;">Classificar</span>
<span class="t" style="left:1167.50px;top:153.84px;font-size:12px;color:#3b3b3b;letter-spacing:0.558px;">Transformar</span>
<span class="t" style="left:1459.00px;top:153.84px;font-size:12px;color:#3b3b3b;letter-spacing:0.746px;">Combinar</span>
<span class="t" style="left:1629.50px;top:153.84px;font-size:12px;color:#3b3b3b;letter-spacing:0.457px;">Insights da IA</span>
<span class="t" style="left:578.80px;top:69.84px;font-size:12px;color:#262626;letter-spacing:0.720px;">Propriedades</span>
<span class="t" style="left:578.80px;top:95.84px;font-size:12px;color:#262626;letter-spacing:0.643px;">Editor Avançado</span>
<span class="t" style="left:578.50px;top:121.84px;font-size:12px;color:#262626;letter-spacing:0.405px;">Gerenciar</span>
<span class="t" style="left:1125.80px;top:69.84px;font-size:12px;color:#262626;letter-spacing:0.635px;">Tipo de Dados: Texto</span>
<span class="t" style="left:1148.50px;top:95.84px;font-size:12px;color:#262626;letter-spacing:0.489px;">Usar a Primeira Linha como Cabeçalho</span>
<span class="t" style="left:1148.50px;top:121.84px;font-size:12px;color:#262626;letter-spacing:0.508px;">Substituir Valores</span>
<span class="t" style="left:1428.80px;top:69.84px;font-size:12px;color:#262626;letter-spacing:0.450px;">Mesclar Consultas</span>
<span class="t" style="left:1428.80px;top:95.84px;font-size:12px;color:#262626;letter-spacing:0.369px;">Acrescentar Consultas</span>
<span class="t" style="left:1428.80px;top:121.84px;font-size:12px;color:#9a9a9a;letter-spacing:0.664px;">Combinar Arquivos</span>
<span class="t" style="left:1610.80px;top:69.84px;font-size:12px;color:#262626;letter-spacing:0.456px;">Análise de Texto</span>
<span class="t" style="left:1610.80px;top:95.84px;font-size:12px;color:#262626;letter-spacing:0.321px;">Pesquisa Visual</span>
<span class="t" style="left:1610.80px;top:121.84px;font-size:12px;color:#262626;letter-spacing:0.480px;">Azure Machine Learning</span>
<span class="t" style="left:30.00px;top:194.25px;font-size:29px;color:#2f2f2f;letter-spacing:-1.950px;-webkit-text-stroke:0.9px #f3f2f1;">Consultas [1]</span>
<span class="t" style="left:69.25px;top:264.68px;font-size:24px;color:#2b2b2b;letter-spacing:-0.990px;">Plan1</span>
<span class="t" style="left:480.00px;top:201.71px;font-size:29px;color:#707070;letter-spacing:0.900px;font-family:'Liberation Serif', serif;font-style:italic;">fx</span>
<span class="t" style="left:552.20px;top:210.36px;font-size:23px;color:#000000;letter-spacing:-0.605px;font-family:'Liberation Mono', monospace;">= Python.Execute(<span style="color:#a31515">&quot;treino = dataset.dropna()#(lf)#(lf)x =</span></span>
<span class="t" style="left:415.75px;top:267.65px;font-size:20.5px;color:#252423;letter-spacing:1.200px;font-weight:700;">Name</span>
<span class="t" style="left:736.25px;top:267.65px;font-size:20.5px;color:#555555;letter-spacing:0.450px;font-weight:700;">Value</span>
<span class="t" style="left:330.30px;top:318.13px;font-size:23px;color:#666666;">1</span>
<span class="t" style="left:331.20px;top:360.13px;font-size:23px;color:#666666;">2</span>
<span class="t" style="left:331.20px;top:400.93px;font-size:23px;color:#666666;">3</span>
<span class="t" style="left:373.60px;top:317.38px;font-size:22px;color:#333333;letter-spacing:0.060px;">dataset</span>
<span class="t" style="left:373.60px;top:359.18px;font-size:22px;color:#333333;letter-spacing:0.756px;">treino</span>
<span class="t" style="left:373.20px;top:401.18px;font-size:22px;color:#333333;">x</span>
<span class="t" style="left:693.20px;top:317.38px;font-size:22px;color:#b5922a;letter-spacing:0.135px;">Table</span>
<span class="t" style="left:693.20px;top:359.18px;font-size:22px;color:#b5922a;letter-spacing:0.135px;">Table</span>
<span class="t" style="left:693.20px;top:401.18px;font-size:22px;color:#b5922a;letter-spacing:0.135px;">Table</span>
<span class="t" style="left:1412.50px;top:193.75px;font-size:29px;color:#2f2f2f;letter-spacing:-1.476px;-webkit-text-stroke:0.9px #f3f2f1;">Config. Consulta</span>
<span class="t" style="left:1436.50px;top:261.78px;font-size:22px;color:#252423;letter-spacing:0.245px;font-weight:700;">PROPRIEDADES</span>
<span class="t" style="left:1435.50px;top:300.61px;font-size:23.5px;color:#2b2b2b;letter-spacing:1.200px;">Nome</span>
<span class="t" style="left:1447.70px;top:344.23px;font-size:23px;color:#3a3a3a;letter-spacing:-1.395px;-webkit-text-stroke:0.7px #ffffff;">Plan1</span>
<span class="t" style="left:1437.50px;top:395.71px;font-size:23.5px;color:#0078d4;letter-spacing:-0.135px;">Todas as Propriedades</span>
<span class="t" style="left:1436.50px;top:464.98px;font-size:22px;color:#252423;letter-spacing:0.516px;font-weight:700;">ETAPAS APLICADAS</span>
<span class="t" style="left:1481.90px;top:513.41px;font-size:23.5px;color:#2b2b2b;letter-spacing:0.225px;">Fonte</span>
<span class="t" style="left:1481.90px;top:553.41px;font-size:23.5px;color:#2b2b2b;">Navegação</span>
<span class="t" style="left:1482.90px;top:593.01px;font-size:23.5px;color:#2b2b2b;letter-spacing:-0.090px;">Cabeçalhos Promovidos</span>
<span class="t" style="left:1483.90px;top:632.81px;font-size:23.5px;color:#2b2b2b;letter-spacing:0.375px;">Tipo Alterado</span>
<span class="t" style="left:1481.90px;top:672.71px;font-size:23.5px;color:#2b2b2b;">Executar script Python</span>
<span class="t" style="left:9.50px;top:1047.38px;font-size:22px;color:#454545;letter-spacing:-0.900px;">2 COLUNAS, 3 LINHAS</span>
<span class="t" style="left:257.00px;top:1047.38px;font-size:22px;color:#454545;letter-spacing:-0.177px;">Criação de perfil de coluna com base nas primeiras 1000 linhas</span>
<span class="t" style="left:1498.50px;top:1047.38px;font-size:22px;color:#454545;letter-spacing:-1.085px;">VISUALIZAÇÃO BAIXADA EM SEXTA-FEIRA</span>
<span class="t" style="left:1902.80px;top:36.26px;font-size:16px;color:#ffffff;-webkit-text-stroke:0.4px #fff;">?</span>
<span class="t" style="left:371.70px;top:268.16px;font-size:18px;color:#57522f;">A</span>
<span class="t" style="left:382.90px;top:262.01px;font-size:17px;color:#57522f;">B</span>
<span class="t" style="left:389.90px;top:274.56px;font-size:18px;color:#57522f;">C</span>

</body></html>
